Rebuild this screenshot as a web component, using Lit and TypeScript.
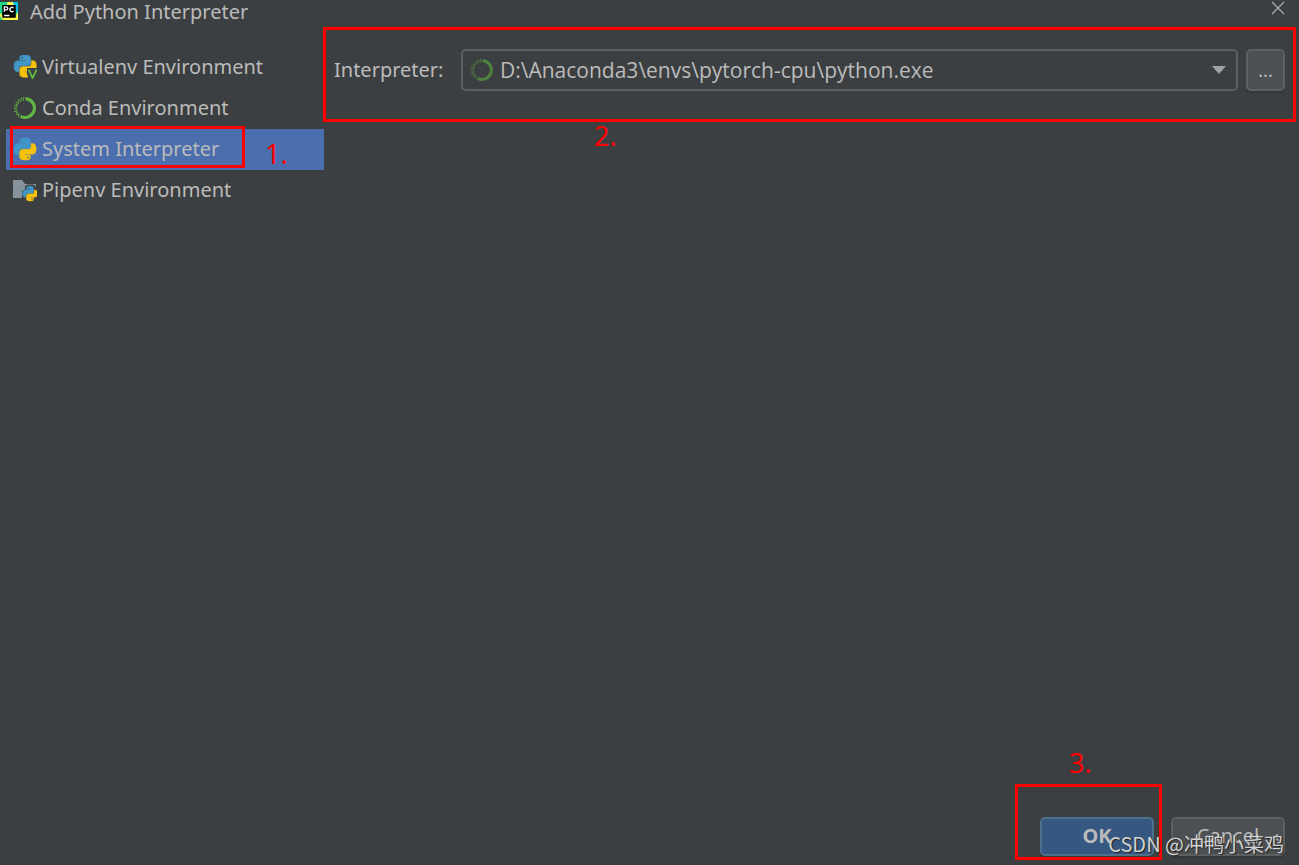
import { LitElement, html, css, svg } from "lit";
import { customElement, property, state } from "lit/decorators.js";
import { classMap } from "lit/directives/class-map.js";

const SNAKE =
  "M14.25.18l.9.2.73.26.59.3.45.32.34.34.25.34.16.33.1.3.04.26.02.2-.01.13V8.5l-.05.63-.13.55-.21.46-.26.38-.3.31-.33.25-.35.19-.35.14-.33.1-.3.07-.26.04-.21.02H8.77l-.69.05-.59.14-.5.22-.41.27-.33.32-.27.35-.2.36-.15.37-.1.35-.07.32-.04.27-.02.21v3.06H3.17l-.21-.03-.28-.07-.32-.12-.35-.18-.36-.26-.36-.36-.35-.46-.32-.59-.28-.73-.21-.88-.14-1.05-.05-1.23.06-1.22.16-1.04.24-.87.32-.71.36-.57.4-.44.42-.33.42-.24.4-.16.36-.1.32-.05.24-.01h.16l.06.01h8.16v-.83H6.18l-.01-2.75-.02-.37.05-.34.11-.31.17-.28.25-.26.31-.23.38-.2.44-.18.51-.15.58-.12.64-.1.71-.06.77-.04.84-.02 1.27.05zm-6.3 1.98l-.23.33-.08.41.08.41.23.34.33.22.41.09.41-.09.33-.22.23-.34.08-.41-.08-.41-.23-.33-.33-.22-.41-.09-.41.09z";

const python = svg`
  <path d=${SNAKE} fill="#4297c9" stroke="#4297c9" stroke-width=".5" />
  <path d=${SNAKE} fill="#f4c20d" stroke="#f4c20d" stroke-width=".5" transform="rotate(180 12 12)" />`;

const conda = svg`
  <path d="M12.5 2.6A9.4 9.4 0 1 1 7.6 20.3" fill="none" stroke="currentColor" stroke-width="3.1" />
  <g fill="currentColor">
    <circle cx="10.6" cy="1.9" r=".8" /><circle cx="10.3" cy="3.9" r=".8" />
    <circle cx="8.2" cy="2.7" r=".9" /><circle cx="7.6" cy="5" r=".8" />
    <circle cx="5.6" cy="4.4" r=".9" /><circle cx="5.4" cy="6.9" r=".8" />
    <circle cx="3.3" cy="6.6" r=".8" /><circle cx="3.9" cy="9" r=".9" />
    <circle cx="1.9" cy="9.4" r=".8" /><circle cx="3.2" cy="11.4" r=".8" />
    <circle cx="1.5" cy="12.3" r=".8" /><circle cx="3.3" cy="13.8" r=".9" />
    <circle cx="2" cy="15.4" r=".8" /><circle cx="4.2" cy="16.2" r=".9" />
    <circle cx="3.6" cy="18.2" r=".8" /><circle cx="5.7" cy="18.4" r="1" />
    <circle cx="5.4" cy="20.4" r=".7" />
  </g>`;

const ICONS: Record<string, unknown> = {
  virtualenv: svg`
    <g transform="translate(1 0) scale(.93)">${python}</g>
    <path d="M14 13h10v11h-8l-2-5z" fill="#3c3f41" />
    <path d="M15.6 14.5l4 8.7 4-8.7" fill="none" stroke="#62b543" stroke-width="1.8" />`,
  conda,
  system: svg`<g transform="translate(1 1) scale(.92)">${python}</g>`,
  pipenv: svg`
    <path d="M0 2h9l3 4h11v14H0z" fill="#87939a" />
    <path d="M12.5 20.5H9V13l3-1.5V8l3-1.5h5L23.5 9v3.5h.5V24H12z" fill="#3c3f41" />
    <g transform="translate(9.6 8.2) scale(.62)">${python}</g>`,
  pycharm: svg`
    <path d="M0 0h24v24H0z" fill="#21d789" />
    <path d="M17 0h7v15l-4-3z" fill="#07c3f2" />
    <path d="M10 0h7l2 5H9zM24 13v11H4l-4-5v-4l6 5h14z" fill="#fcf84a" />
    <path d="M3 4h18v17H3z" fill="#000" />
    <path d="M5.8 13V6.6h2.6a2 2 0 0 1 0 4H5.8M18 8a2.8 2.8 0 1 0 0 4M5.5 18h7" fill="none" stroke="#fff" stroke-width="1.7" />`,
  close: svg`<path d="M6 6l12 12M18 6L6 18" fill="none" stroke="#afb1b3" stroke-width="1.1" />`,
};

@customElement("app-icon")
class AppIcon extends LitElement {
  static styles = css`
    :host { display: block; flex: none; width: 24px; height: 24px; }
    .glyph { display: block; width: 100%; height: 100%; }
  `;
  @property() name = "";
  render() {
    return html`<svg class="glyph" viewBox="0 0 24 24" aria-hidden="true">${ICONS[this.name]}</svg>`;
  }
}

@customElement("app-root")
class AppRoot extends LitElement {
  static styles = css`
    :host {
      display: flex; flex-direction: column; box-sizing: border-box; min-height: 100vh;
      background: #3c3f41; color: #bbbbbb;
      font: 20px/28px "Noto Sans", "Noto Sans CJK SC", sans-serif;
    }
    button, select { font: inherit; color: inherit; margin: 0; box-sizing: border-box; }
    .titlebar { display: flex; height: 28px; padding-right: 9px; }
    .logo { width: 18px; height: 18px; margin-top: 2px; }
    .title { flex: 1; margin: -2px 0 0 12px; font-size: inherit; font-weight: 400; }
    .close { align-self: flex-start; margin-top: -4px; padding: 0; border: 0; background: none; }
    .body { flex: 1; display: flex; }
    .kinds { list-style: none; width: 318px; margin: 0; padding: 19px 0 0 6px; flex: none; }
    .kind { position: relative; }
    .pick {
      display: flex; align-items: center; gap: 5px; width: 100%; height: 41px;
      padding: 0 7px 2px; border: 0; background: none; text-align: left;
    }
    .conda { color: #62b543; }
    .chosen { background: #4b6eaf; }
    .fields { flex: 1; position: relative; padding: 21px 14px 0 10px; }
    .row { display: flex; align-items: center; }
    .label { width: 127px; }
    .combo { flex: 1; display: grid; align-items: center; }
    .value {
      grid-area: 1 / 1; width: 100%; height: 42px; padding: 0 37px; appearance: none;
      border: 2px solid #5e6060; border-radius: 5px; background: #3c3f41;
      font-family: "Open Sans", sans-serif; font-size: 21px;
    }
    .badge { grid-area: 1 / 1; z-index: 1; margin-left: 9px; color: #4f7f3f; pointer-events: none; }
    .arrow {
      grid-area: 1 / 1; z-index: 1; justify-self: end; margin-right: 12px; pointer-events: none;
      border: 7px solid transparent; border-top: 8px solid #9fa2a5; border-bottom: 0;
    }
    .button {
      padding: 0; border: 2px solid #5e6060; border-radius: 5px; background: #4c5052;
      box-shadow: 0 2px 1px #353739;
    }
    .browse { width: 39px; height: 42px; margin-left: 8px; font-size: 18px; }
    .footer { display: flex; justify-content: flex-end; gap: 17px; padding: 0 14px 9px; position: relative; }
    .action { width: 114px; height: 39px; padding-bottom: 2px; }
    .primary { background: #365880; border-color: #4c708c; font-weight: 700; }
    .spot { position: relative; display: flex; }
    .mark { position: absolute; border: 3px solid #ff0000; pointer-events: none; z-index: 2; }
    .mark-kind { left: 4px; top: -3px; width: 229px; height: 36px; }
    .mark-fields { inset: -1px 3px auto -1px; height: 89px; }
    .mark-ok { inset: -33px -8px -4px -25px; }
    .step { position: absolute; color: #ff0000; font-size: 27px; line-height: 36px; pointer-events: none; }
    .step-kind { left: 259px; top: 7px; }
    .step-fields { left: 270px; top: 90px; }
    .step-ok { left: 29px; top: -72px; }
    .credit {
      position: absolute; right: 15px; bottom: 7px; z-index: 3;
      font: 20px/28px "Noto Sans CJK SC", sans-serif;
      color: #d0d2d3; text-shadow: 1px 1px 1px #222; white-space: nowrap; pointer-events: none;
    }
  `;

  @state() kind = "system";

  kinds = [
    ["virtualenv", "Virtualenv Environment"],
    ["conda", "Conda Environment"],
    ["system", "System Interpreter"],
    ["pipenv", "Pipenv Environment"],
  ];

  render() {
    return html`
      <header class="titlebar">
        <app-icon class="logo" name="pycharm"></app-icon>
        <h1 class="title">Add Python Interpreter</h1>
        <button class="close" aria-label="Close"><app-icon name="close"></app-icon></button>
      </header>
      <main class="body">
        <ul class="kinds">
          ${this.kinds.map(
            ([id, label]) => html`<li class="kind">
              <button
                class=${classMap({ pick: true, chosen: id === this.kind })}
                aria-pressed=${id === this.kind}
                @click=${() => (this.kind = id)}
              ><app-icon class=${id} name=${id}></app-icon>${label}</button>
              ${id === "system"
                ? html`<span class="mark mark-kind"></span><span class="step step-kind">1.</span>`
                : ""}
            </li>`
          )}
        </ul>
        <section class="fields">
          <div class="row">
            <label class="label" for="interpreter">Interpreter:</label>
            <div class="combo">
              <select class="value" id="interpreter">
                <option>D:\\Anaconda3\\envs\\pytorch-cpu\\python.exe</option>
              </select>
              <app-icon class="badge" name="conda"></app-icon>
              <span class="arrow"></span>
            </div>
            <button class="button browse" aria-label="Browse">...</button>
          </div>
          <span class="mark mark-fields"></span>
          <span class="step step-fields">2.</span>
        </section>
      </main>
      <footer class="footer">
        <div class="spot">
          <button class="button action primary">OK</button>
          <span class="mark mark-ok"></span>
          <span class="step step-ok">3.</span>
        </div>
        <button class="button action">Cancel</button>
        <span class="credit">CSDN @冲鸭小菜鸡</span>
      </footer>
    `;
  }
}
